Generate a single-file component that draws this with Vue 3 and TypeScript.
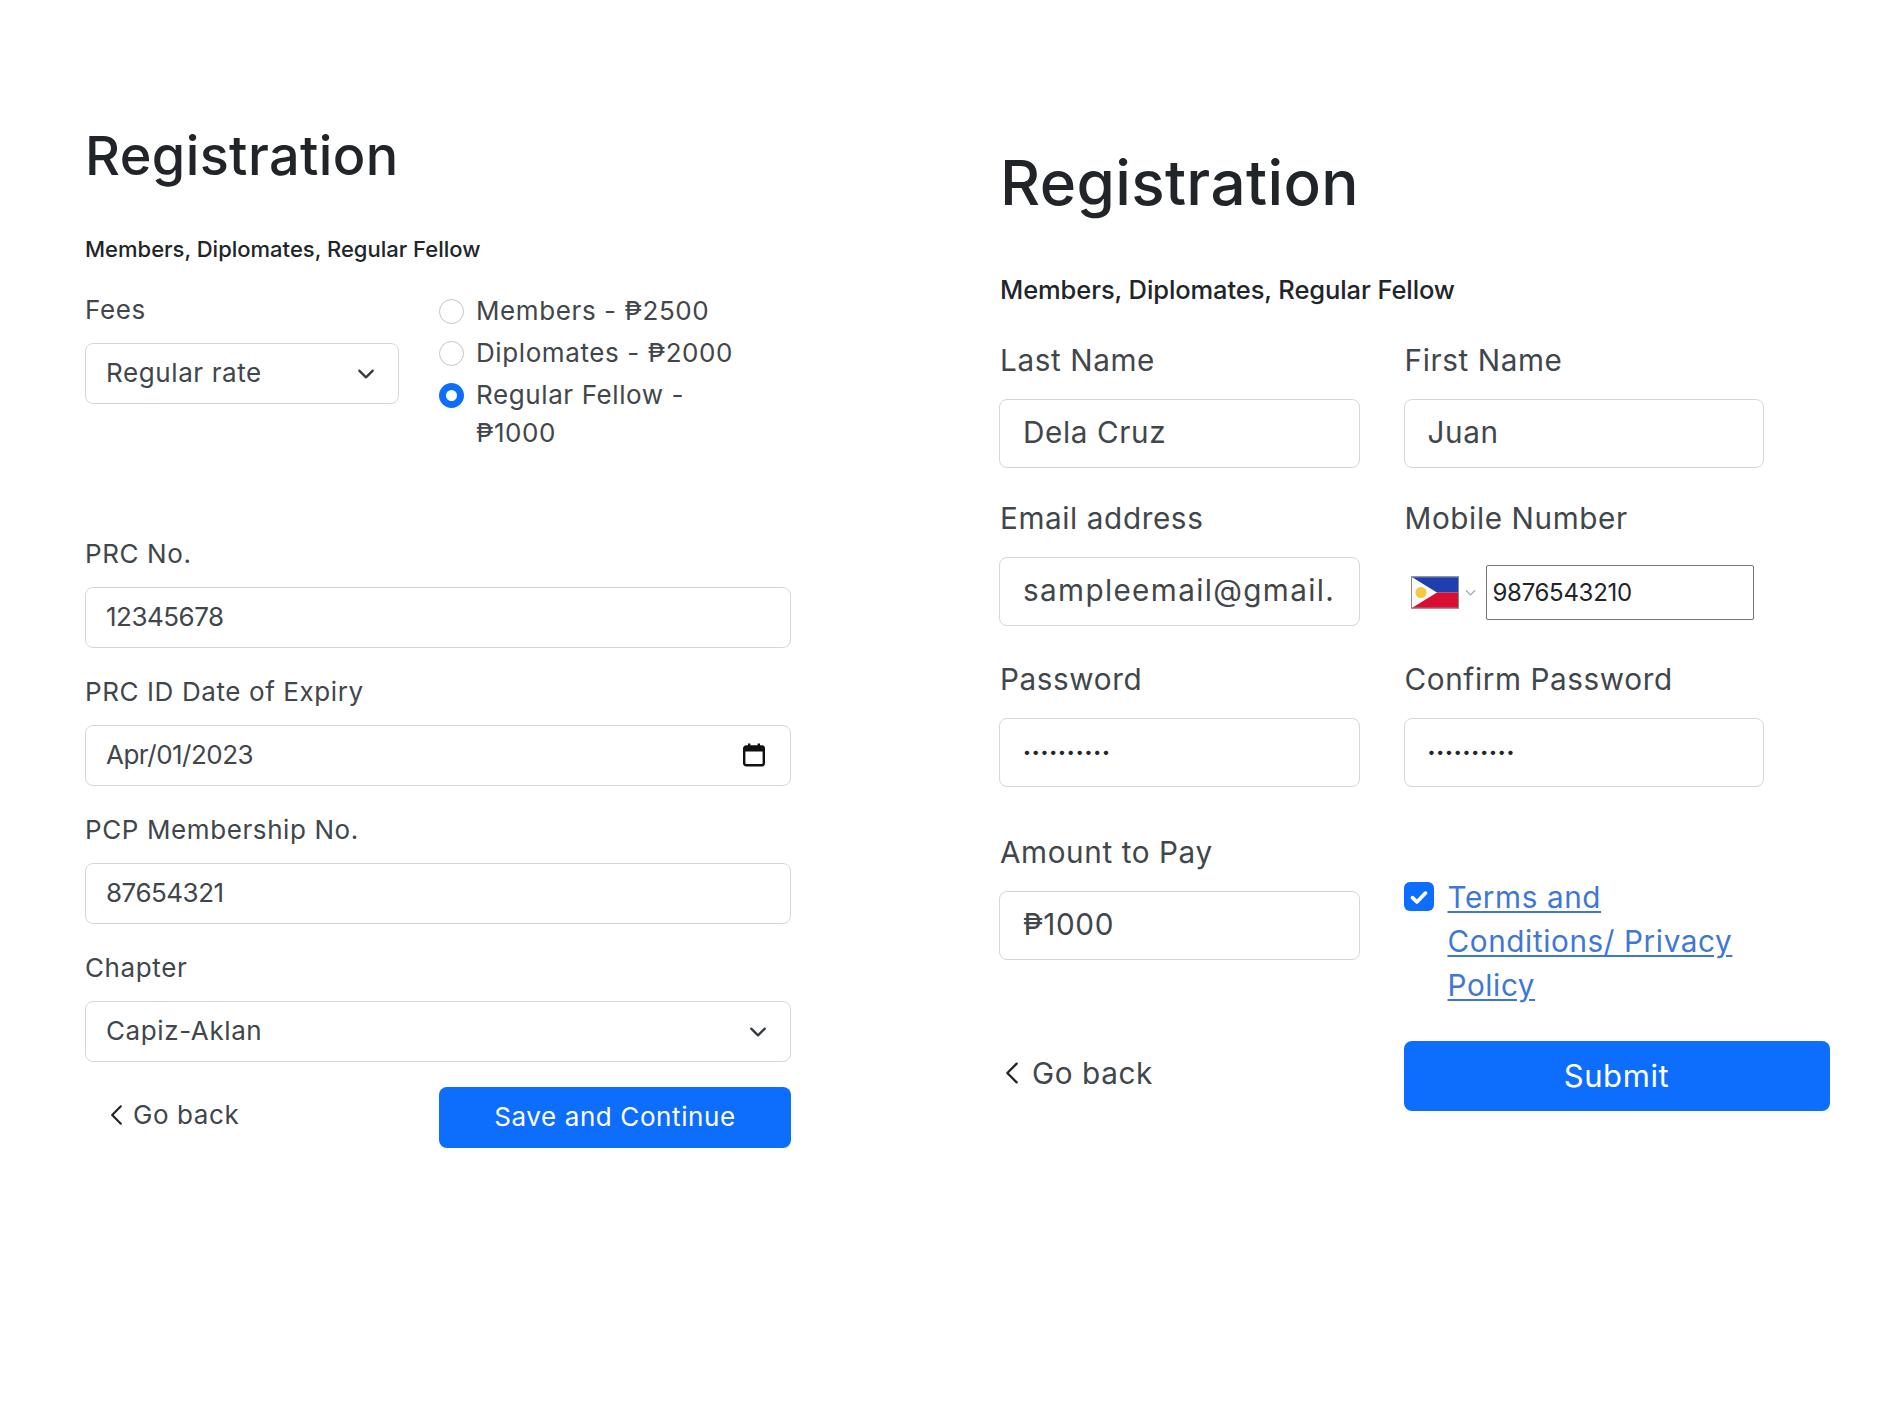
<script setup lang="ts">
const radios = [
  { label: 'Members - ₱2500', checked: false },
  { label: 'Diplomates - ₱2000', checked: false },
  { label: 'Regular Fellow - ₱1000', checked: true },
]
const leftFields = [
  { label: 'PRC No.', value: '12345678', num: true },
  { label: 'PRC ID Date of Expiry', value: 'Apr/01/2023', icon: 'date', num: true },
  { label: 'PCP Membership No.', value: '87654321', num: true },
  { label: 'Chapter', value: 'Capiz-Aklan', icon: 'chevron' },
]
</script>

<template>
  <main class="page">
    <section class="left">
      <h1 class="title">Registration</h1>
      <p class="sub">Members, Diplomates, Regular Fellow</p>

      <div class="split fees">
        <div>
          <label class="lab">Fees</label>
          <div class="box-wrap">
            <input class="box" value="Regular rate" readonly />
            <svg class="chev" viewBox="0 0 16 16"><path d="M2 5l6 6 6-6" /></svg>
          </div>
        </div>
        <div class="radios">
          <label v-for="r in radios" :key="r.label" class="radio">
            <input type="radio" name="fee" :checked="r.checked" />
            <span>{{ r.label }}</span>
          </label>
        </div>
      </div>

      <div class="stack">
        <div v-for="f in leftFields" :key="f.label">
          <label class="lab">{{ f.label }}</label>
          <div class="box-wrap">
            <input class="box" :class="{ num: f.num }" :value="f.value" readonly />
            <svg v-if="f.icon === 'chevron'" class="chev" viewBox="0 0 16 16"><path d="M2 5l6 6 6-6" /></svg>
            <svg v-if="f.icon === 'date'" class="cal" viewBox="0 0 22 24">
              <rect x="1.2" y="4" width="19.6" height="18.8" rx="2" fill="none" stroke="#111" stroke-width="2.4" />
              <path d="M1.2 4h19.6v5H1.2zM5 1h2.4v4H5zM14.6 1H17v4h-2.4z" fill="#111" />
            </svg>
          </div>
        </div>
      </div>

      <div class="split actions">
        <a class="back">
          <svg viewBox="0 0 12 20"><path d="M10 2L2 10l8 8" /></svg>
          Go back
        </a>
        <button class="primary">Save and Continue</button>
      </div>
    </section>

    <section class="right">
      <h1 class="title">Registration</h1>
      <p class="sub">Members, Diplomates, Regular Fellow</p>

      <div class="row r1">
        <div><label class="lab">Last Name</label><input class="box" value="Dela Cruz" readonly /></div>
        <div><label class="lab">First Name</label><input class="box" value="Juan" readonly /></div>
      </div>
      <div class="row r2">
        <div><label class="lab">Email address</label><input class="box email" value="sampleemail@gmail." readonly /></div>
        <div>
          <label class="lab">Mobile Number</label>
          <div class="tel">
            <svg class="flag" viewBox="0 0 48 32">
              <rect width="48" height="16" fill="#1f3fb0" />
              <rect y="16" width="48" height="16" fill="#d90f32" />
              <path d="M0 0l26 16L0 32z" fill="#fafafa" />
              <circle cx="10" cy="16" r="5.5" fill="#f5c842" />
              <rect x=".5" y=".5" width="47" height="31" fill="none" stroke="#8a8a8a" />
            </svg>
            <svg class="tel-chev" viewBox="0 0 12 8"><path d="M1 1l5 5 5-5" /></svg>
            <input class="tel-input" value="9876543210" readonly />
          </div>
        </div>
      </div>
      <div class="row r3">
        <div><label class="lab">Password</label><input class="box pw" type="password" value="1234567890" readonly /></div>
        <div><label class="lab">Confirm Password</label><input class="box pw" type="password" value="1234567890" readonly /></div>
      </div>
      <div class="row r4">
        <div><label class="lab">Amount to Pay</label><input class="box" value="₱1000" readonly /></div>
        <label class="terms">
          <span class="check">
            <svg viewBox="0 0 20 20"><path d="M5 10.5l3.4 3.4L15 7" /></svg>
          </span>
          <a>Terms and Conditions/ Privacy Policy</a>
        </label>
      </div>
      <div class="row actions-r">
        <a class="back">
          <svg viewBox="0 0 12 20"><path d="M10 2L2 10l8 8" /></svg>
          Go back
        </a>
        <button class="primary">Submit</button>
      </div>
    </section>
  </main>
</template>

<style scoped>
.page {
  display: flex;
  align-items: flex-start;
  height: 1417px;
  box-sizing: border-box;
  padding-left: 85px;
  gap: 209px;
  font-family: Inter, "Liberation Sans", sans-serif;
  color: #41464b;
  background: #fff;
}
.left { width: 706px; padding-top: 124px; flex: none; --fs: 26px; --ls: .6px; }
.right { width: 830px; padding-top: 146px; flex: none; --fs: 29.7px; --ls: .6px; }
.lab { display: block; font-size: var(--fs); letter-spacing: var(--ls); white-space: nowrap; }
.left .lab { line-height: 32px; margin-bottom: 17px; }
.right .lab { line-height: 36px; margin-bottom: 21px; }
.title { margin: 0; font-weight: 500; color: #212529; line-height: 1.2; }
.left .title { font-size: 54px; letter-spacing: .4px; }
.right .title { font-size: 62px; letter-spacing: .35px; margin-bottom: 55px; }
.sub { margin: 0; color: #212529; font-weight: 500; }
.left .sub { font-size: 22px; line-height: 26px; margin-top: 47px; letter-spacing: 0; }
.right .sub { font-size: 25.5px; line-height: 29px; letter-spacing: -.1px; }

.box-wrap { position: relative; }
.box {
  display: block;
  box-sizing: border-box;
  width: 100%;
  border: 1.5px solid #d4d7da;
  border-radius: 8px;
  background: #fff;
  color: #41464b;
  font: inherit;
  font-size: var(--fs);
  letter-spacing: var(--ls);
  outline: none;
}
.left .box { height: 61px; padding: 0 20px 2px; }
.right .box { height: 69px; padding: 0 23px 3px; }
.left .box.num { letter-spacing: -.5px; }
.right .box.email { letter-spacing: 1.35px; }
.right .box.pw { font-size: 14px; color: #212529; letter-spacing: .9px; }

.chev { position: absolute; right: 24px; top: 22px; width: 18px; height: 18px; }
.chev path { fill: none; stroke: #343a40; stroke-width: 2; stroke-linecap: round; stroke-linejoin: round; }
.cal { position: absolute; right: 26px; top: 17px; width: 22px; height: 25px; }

.split { display: grid; grid-template-columns: 314px 352px; column-gap: 40px; }
.fees { margin-top: 32px; height: 244px; }
.radios { margin-top: -2px; }
.radio {
  display: flex;
  gap: 12px;
  font-size: var(--fs);
  letter-spacing: var(--ls);
  line-height: 38px;
  margin-bottom: 4px;
}
.radio span { max-width: 280px; }
.radio input {
  appearance: none;
  flex: none;
  box-sizing: border-box;
  width: 25px;
  height: 25px;
  margin: 7px 0 0;
  border: 1.5px solid #c2c5c8;
  border-radius: 50%;
  background: #fff;
}
.radio input:checked { border: 7.5px solid #0d6efd; }

.stack { display: flex; flex-direction: column; gap: 28px; }

.actions { margin-top: 25px; align-items: start; }
.back {
  display: flex;
  align-items: center;
  font-size: var(--fs);
  letter-spacing: var(--ls);
}
.back svg { flex: none; }
.back path { fill: none; stroke: #212529; stroke-width: 2; stroke-linecap: round; stroke-linejoin: round; }
.actions .back { padding: 10px 0 0 25px; line-height: 36px; gap: 10px; }
.actions .back svg { width: 13px; height: 22px; }
.primary {
  border: 0;
  border-radius: 8px;
  background: #0d6efd;
  color: #fff;
  font: inherit;
  font-size: var(--fs);
  letter-spacing: var(--ls);
  padding: 0 0 2px;
}
.actions .primary { height: 61px; }

.row { display: grid; grid-template-columns: 361px 360px; column-gap: 43.5px; margin-left: -1px; }
.row .lab { margin-left: 1px; }
.r1 { margin-top: 38px; }
.r2 { margin-top: 32px; }
.r3 { margin-top: 35px; }
.r4 { margin-top: 47px; }
.tel { display: flex; align-items: center; padding: 8px 0 0 7px; }
.flag { width: 48px; height: 33px; flex: none; }
.tel-chev { width: 11px; height: 8px; margin: 0 10px 0 6px; flex: none; }
.tel-chev path { fill: none; stroke: #a8a8a8; stroke-width: 1.3; }
.tel-input {
  box-sizing: border-box;
  width: 268px;
  height: 55px;
  padding: 0 6px;
  border: 1.5px solid #767676;
  border-radius: 2px;
  font: inherit;
  font-size: 24px;
  letter-spacing: -.3px;
  color: #212529;
  outline: none;
}
.terms { display: flex; gap: 14px; margin-top: 41px; font-size: var(--fs); letter-spacing: var(--ls); line-height: 44px; }
.terms a { color: #3f77d6; text-decoration: underline; text-underline-offset: 3px; }
.check {
  flex: none;
  width: 30px;
  height: 29px;
  margin-top: 7px;
  border-radius: 6px;
  background: #0d6efd;
  display: flex;
  align-items: center;
  justify-content: center;
}
.check svg { width: 26px; height: 26px; }
.check path { fill: none; stroke: #fff; stroke-width: 2.8; stroke-linecap: round; stroke-linejoin: round; }

.actions-r { margin-top: 34px; grid-template-columns: 361px 426px; align-items: start; }
.actions-r .back { padding: 14px 0 0 6px; line-height: 36px; gap: 13px; }
.actions-r .back svg { width: 14px; height: 24px; }
.actions-r .primary { height: 70px; font-size: 31px; }
</style>
